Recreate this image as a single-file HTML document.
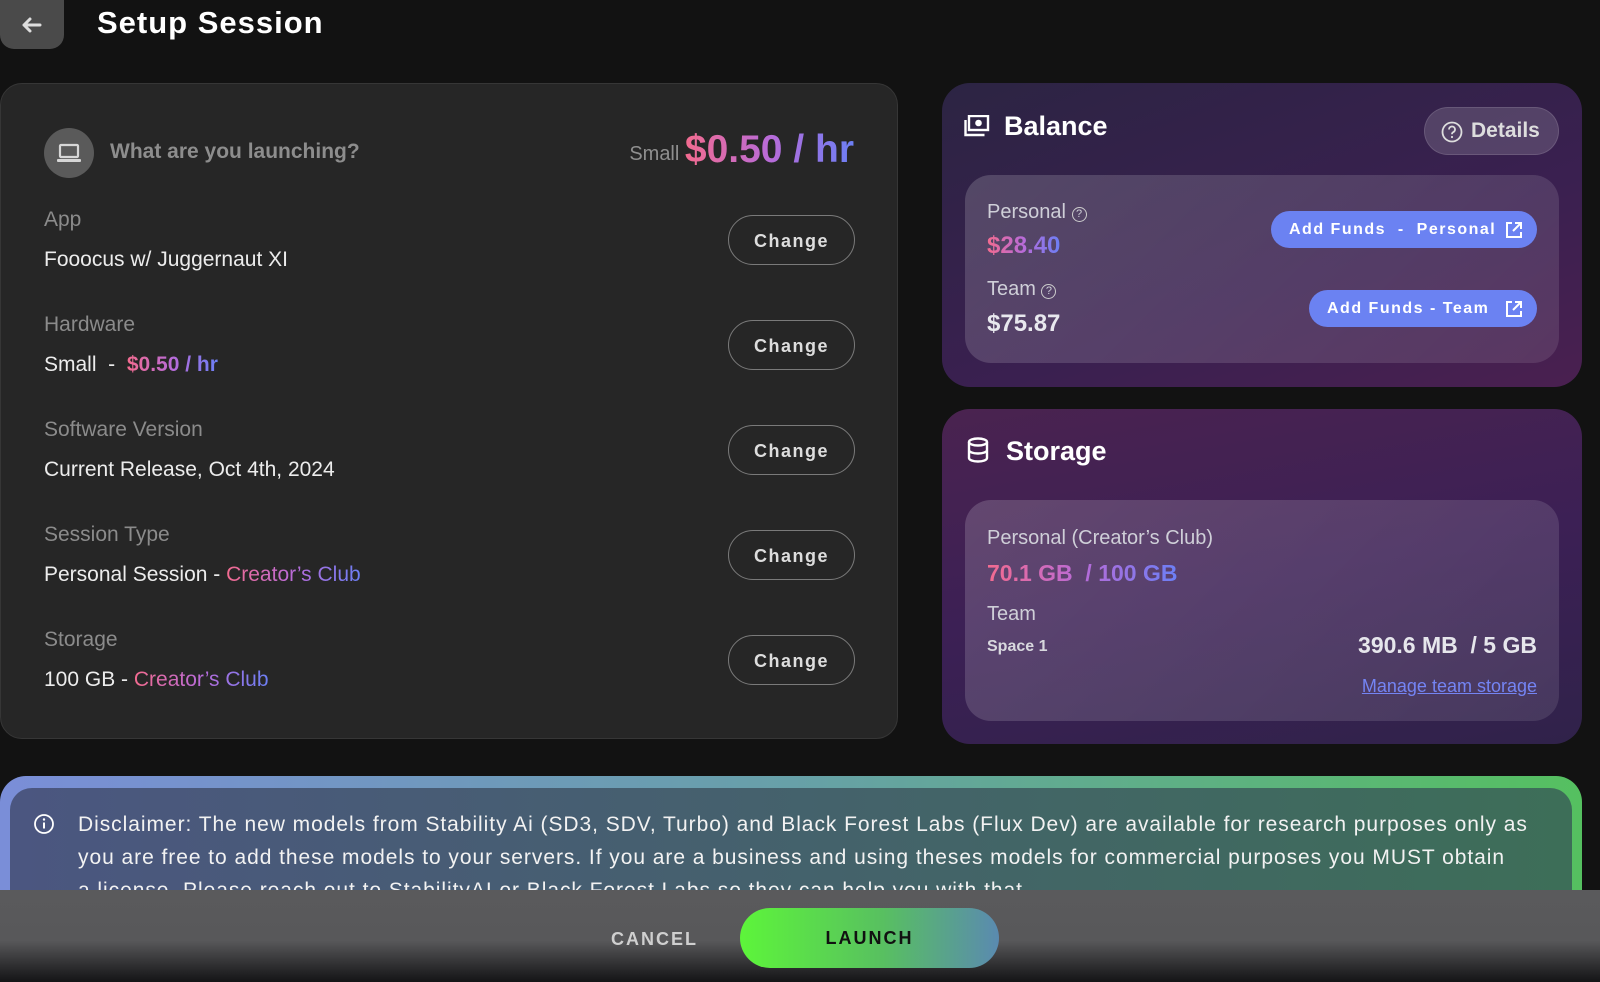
<!DOCTYPE html>
<html><head><meta charset="utf-8"><style>
*{box-sizing:border-box;margin:0;padding:0}
body{width:1600px;height:982px;overflow:hidden;background:#121212;font-family:"Liberation Sans",sans-serif;color:#e6e6e6;position:relative}
.abs{position:absolute}
.back{left:0;top:0;width:64px;height:49px;background:#4a4a4a;border-radius:0 0 14px 14px;border-top-left-radius:0}
.title{left:97px;top:5px;font-size:31px;font-weight:bold;color:#fff;letter-spacing:1px}
.left{left:0;top:83px;width:898px;height:656px;background:#262626;border:1px solid #363636;border-radius:22px}
.grad{background:linear-gradient(90deg,#f36b8f,#b86bd8 50%,#6c7ff5);-webkit-background-clip:text;background-clip:text;color:transparent}
.lbl{font-size:21px;color:#8b8b8b}
.val{font-size:21px;color:#ececec}
.chg{width:127px;height:50px;border:1px solid #7a7a7a;border-radius:25px;font-size:18px;font-weight:bold;color:#ddd;text-align:center;line-height:50px;letter-spacing:1.5px}
.panel{left:942px;width:640px;border-radius:28px}
.inner{left:23px;width:594px;border-radius:26px;background:linear-gradient(135deg,rgba(255,255,255,.17),rgba(255,255,255,.1))}
.btn{height:37px;border-radius:19px;background:#6b82f2;color:#fff;font-size:16px;font-weight:bold;letter-spacing:1.5px;line-height:37px;padding-left:18px}
</style></head><body>
<div class="abs back"><svg width="64" height="49" viewBox="0 0 64 49"><path d="M40 25H24M30 19l-6 6 6 6" stroke="#ddd" stroke-width="3" fill="none" stroke-linecap="round" stroke-linejoin="round"/></svg></div>
<div class="abs title">Setup Session</div>

<div class="abs left">
 <div class="abs" style="left:43px;top:44px;width:50px;height:50px;border-radius:50%;background:#5a5a5a"><svg width="50" height="50" viewBox="0 0 50 50"><rect x="16" y="17" width="18" height="12" rx="1" fill="none" stroke="#d6d6d6" stroke-width="2.2"/><rect x="13" y="31" width="24" height="3" rx="1" fill="#d6d6d6"/></svg></div>
 <div class="abs" style="left:109px;top:56px;font-size:21px;font-weight:bold;color:#8d8d8d">What are you launching?</div>
 <div class="abs" style="right:43px;top:44px;white-space:nowrap"><span style="font-size:20px;color:#8f8f8f;vertical-align:2px">Small </span> <span class="grad" style="font-size:39px;font-weight:bold">$0.50 / hr</span></div>

 <div class="abs lbl" style="left:43px;top:124px">App</div>
 <div class="abs val" style="left:43px;top:164px">Fooocus w/ Juggernaut XI</div>
 <div class="abs chg" style="left:727px;top:131px">Change</div>

 <div class="abs lbl" style="left:43px;top:229px">Hardware</div>
 <div class="abs val" style="left:43px;top:269px">Small &nbsp;- &nbsp;<span class="grad" style="font-weight:bold">$0.50 / hr</span></div>
 <div class="abs chg" style="left:727px;top:236px">Change</div>

 <div class="abs lbl" style="left:43px;top:334px">Software Version</div>
 <div class="abs val" style="left:43px;top:374px">Current Release, Oct 4th, 2024</div>
 <div class="abs chg" style="left:727px;top:341px">Change</div>

 <div class="abs lbl" style="left:43px;top:439px">Session Type</div>
 <div class="abs val" style="left:43px;top:479px">Personal Session - <span class="grad">Creator’s Club</span></div>
 <div class="abs chg" style="left:727px;top:446px">Change</div>

 <div class="abs lbl" style="left:43px;top:544px">Storage</div>
 <div class="abs val" style="left:43px;top:584px">100 GB - <span class="grad">Creator’s Club</span></div>
 <div class="abs chg" style="left:727px;top:551px">Change</div>
</div>

<div class="abs panel" style="top:83px;height:304px;background:linear-gradient(160deg,#2c2443,#3a2050 60%,#4a2050)">
 <svg class="abs" style="left:22px;top:32px" width="26" height="22" viewBox="0 0 26 22"><rect x="5" y="1" width="19" height="14" fill="none" stroke="#fff" stroke-width="2.4"/><circle cx="14.5" cy="8" r="3.3" fill="#fff"/><path d="M1.5 5v15h19" fill="none" stroke="#fff" stroke-width="2.4"/></svg>
 <div class="abs" style="left:62px;top:28px;font-size:27px;font-weight:bold;color:#fff">Balance</div>
 <div class="abs" style="left:482px;top:24px;width:135px;height:48px;border-radius:24px;background:rgba(255,255,255,.15);border:1px solid rgba(255,255,255,.12);color:#ddd;font-size:21px;font-weight:bold;line-height:46px;padding-left:46px">Details
  <svg class="abs" style="left:16px;top:13px" width="22" height="22" viewBox="0 0 22 22"><circle cx="11" cy="11" r="9.5" fill="none" stroke="#ddd" stroke-width="1.8"/><path d="M8 8.5a3 3 0 1 1 4 2.8c-.8.4-1 1-1 2" fill="none" stroke="#ddd" stroke-width="1.8"/><circle cx="11" cy="16" r="1.1" fill="#ddd"/></svg></div>
 <div class="abs inner" style="top:92px;height:188px">
  <div class="abs" style="left:22px;top:26px;font-size:20px;color:#cfcfd8">Personal <span style="display:inline-block;width:15px;height:15px;border:1.6px solid #ccc;border-radius:50%;font-size:11px;text-align:center;line-height:12px;vertical-align:1px">?</span></div>
  <div class="abs grad" style="left:22px;top:57px;font-size:24px;font-weight:bold">$28.40</div>
  <div class="abs" style="left:22px;top:103px;font-size:20px;color:#cfcfd8">Team <span style="display:inline-block;width:15px;height:15px;border:1.6px solid #ccc;border-radius:50%;font-size:11px;text-align:center;line-height:12px;vertical-align:1px">?</span></div>
  <div class="abs" style="left:22px;top:135px;font-size:24px;font-weight:bold;color:#e8e8ee">$75.87</div>
  <div class="abs btn" style="left:306px;width:266px;top:36px">Add Funds &nbsp;- &nbsp;Personal
   <svg class="abs" style="right:14px;top:10px" width="18" height="18" viewBox="0 0 18 18"><path d="M7 2H2v14h14v-5M10 2h6v6M16 2L8 10" fill="none" stroke="#fff" stroke-width="2"/></svg></div>
  <div class="abs btn" style="left:344px;top:115px;width:228px">Add Funds - Team
   <svg class="abs" style="right:14px;top:10px" width="18" height="18" viewBox="0 0 18 18"><path d="M7 2H2v14h14v-5M10 2h6v6M16 2L8 10" fill="none" stroke="#fff" stroke-width="2"/></svg></div>
 </div>
</div>

<div class="abs panel" style="top:409px;height:335px;background:linear-gradient(170deg,#4a2350,#3c2055 50%,#30224a)">
 <svg class="abs" style="left:25px;top:28px" width="22" height="26" viewBox="0 0 22 26"><ellipse cx="11" cy="5" rx="9" ry="3.5" fill="none" stroke="#fff" stroke-width="2.4"/><path d="M2 5v16c0 2 4 3.5 9 3.5s9-1.5 9-3.5V5M2 13c0 2 4 3.5 9 3.5s9-1.5 9-3.5" fill="none" stroke="#fff" stroke-width="2.4"/></svg>
 <div class="abs" style="left:64px;top:27px;font-size:27px;font-weight:bold;color:#fff">Storage</div>
 <div class="abs inner" style="top:91px;height:221px">
  <div class="abs" style="left:22px;top:27px;font-size:20px;color:#cfcfd8">Personal (Creator’s Club)</div>
  <div class="abs grad" style="left:22px;top:60px;font-size:23px;font-weight:bold">70.1 GB &nbsp;/ 100 GB</div>
  <div class="abs" style="left:22px;top:103px;font-size:20px;color:#cfcfd8">Team</div>
  <div class="abs" style="left:22px;top:138px;font-size:16px;font-weight:bold;color:#d8d8de">Space 1</div>
  <div class="abs" style="right:22px;top:132px;font-size:23px;font-weight:bold;color:#e6e6ec">390.6 MB &nbsp;/ 5 GB</div>
  <div class="abs" style="right:22px;top:176px;font-size:18px;color:#7484f4;text-decoration:underline">Manage team storage</div>
 </div>
</div>

<div class="abs" style="left:0;top:776px;width:1582px;height:150px;border-radius:26px;background:linear-gradient(90deg,#7a8ed8,#67a0a8 50%,#55c060)">
 <div class="abs" style="left:10px;top:12px;width:1562px;height:150px;border-radius:22px;background:linear-gradient(90deg,#4b5680,#465f70 40%,#3d6e58)">
  <svg class="abs" style="left:23px;top:25px" width="22" height="22" viewBox="0 0 22 22"><circle cx="11" cy="11" r="9" fill="none" stroke="#fff" stroke-width="1.8"/><path d="M11 9.5v6" stroke="#fff" stroke-width="2"/><circle cx="11" cy="6.5" r="1.2" fill="#fff"/></svg>
  <div class="abs" style="left:68px;top:20px;width:1480px;font-size:21px;line-height:33px;color:#f2f2f2;white-space:nowrap;letter-spacing:0.95px">Disclaimer: The new models from Stability Ai (SD3, SDV, Turbo) and Black Forest Labs (Flux Dev) are available for research purposes only as<br>you are free to add these models to your servers. If you are a business and using theses models for commercial purposes you MUST obtain<br>a license. Please reach out to StabilityAI or Black Forest Labs so they can help you with that.</div>
 </div>
</div>

<div class="abs" style="left:0;top:890px;width:1600px;height:92px;background:linear-gradient(180deg,#5a5a5c,#58585a 55%,#2a2a2c 85%,#141416)"></div>
<div class="abs" style="left:611px;top:929px;font-size:18px;font-weight:bold;color:#cfcfcf;letter-spacing:2px">CANCEL</div>
<div class="abs" style="left:740px;top:908px;width:259px;height:60px;border-radius:30px;background:linear-gradient(90deg,#5df53a,#58c060 55%,#5a8ab0);text-align:center;line-height:60px;font-size:18px;font-weight:bold;color:#111;letter-spacing:2px">LAUNCH</div>
</body></html>
